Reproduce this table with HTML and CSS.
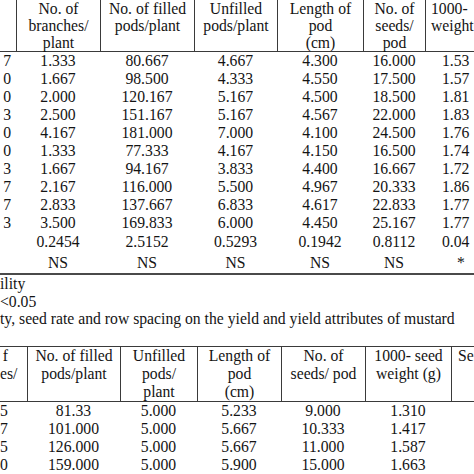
FILE: index.html
```html
<!DOCTYPE html>
<html>
<head>
<meta charset="utf-8">
<link rel="stylesheet" href="styles.css">
</head>
<body>
<div class="page">
  <table class="t1">
    <colgroup>
      <col class="a0"><col class="a1"><col class="a2"><col class="a3"><col class="a4"><col class="a5"><col class="a6">
    </colgroup>
    <thead>
      <tr>
        <th class="stub"></th>
        <th>No. of<br>branches/<br>plant</th>
        <th>No. of filled<br>pods/plant</th>
        <th>Unfilled<br>pods/plant</th>
        <th>Length of<br>pod<br>(cm)</th>
        <th>No. of<br>seeds/<br>pod</th>
        <th class="last">1000-<br>weight</th>
      </tr>
    </thead>
    <tbody>
      <tr><td class="stub">7</td><td>1.333</td><td>80.667</td><td>4.667</td><td>4.300</td><td>16.000</td><td class="last">1.53</td></tr>
      <tr><td class="stub">0</td><td>1.667</td><td>98.500</td><td>4.333</td><td>4.550</td><td>17.500</td><td class="last">1.57</td></tr>
      <tr><td class="stub">0</td><td>2.000</td><td>120.167</td><td>5.167</td><td>4.500</td><td>18.500</td><td class="last">1.81</td></tr>
      <tr><td class="stub">3</td><td>2.500</td><td>151.167</td><td>5.167</td><td>4.567</td><td>22.000</td><td class="last">1.83</td></tr>
      <tr><td class="stub">0</td><td>4.167</td><td>181.000</td><td>7.000</td><td>4.100</td><td>24.500</td><td class="last">1.76</td></tr>
      <tr><td class="stub">0</td><td>1.333</td><td>77.333</td><td>4.167</td><td>4.150</td><td>16.500</td><td class="last">1.74</td></tr>
      <tr><td class="stub">3</td><td>1.667</td><td>94.167</td><td>3.833</td><td>4.400</td><td>16.667</td><td class="last">1.72</td></tr>
      <tr><td class="stub">7</td><td>2.167</td><td>116.000</td><td>5.500</td><td>4.967</td><td>20.333</td><td class="last">1.86</td></tr>
      <tr><td class="stub">7</td><td>2.833</td><td>137.667</td><td>6.833</td><td>4.617</td><td>22.833</td><td class="last">1.77</td></tr>
      <tr><td class="stub">3</td><td>3.500</td><td>169.833</td><td>6.000</td><td>4.450</td><td>25.167</td><td class="last">1.77</td></tr>
      <tr class="cd"><td class="stub"></td><td>0.2454</td><td>2.5152</td><td>0.5293</td><td>0.1942</td><td>0.8112</td><td class="last">0.04</td></tr>
      <tr class="sig"><td class="stub"></td><td>NS</td><td>NS</td><td>NS</td><td>NS</td><td>NS</td><td class="last star">*</td></tr>
    </tbody>
  </table>

  <div class="notes">
    <p class="n1">ility</p>
    <p class="n2">&lt;0.05</p>
    <p class="n3">ty, seed rate and row spacing on the yield and yield attributes of mustard</p>
  </div>

  <table class="t2">
    <colgroup>
      <col class="b0"><col class="b1"><col class="b2"><col class="b3"><col class="b4"><col class="b5"><col class="b6">
    </colgroup>
    <thead>
      <tr>
        <th class="stub"><span class="s1">f</span><br><span class="s2">es/</span></th>
        <th>No. of filled<br>pods/plant</th>
        <th>Unfilled<br>pods/<br>plant</th>
        <th>Length of<br>pod<br>(cm)</th>
        <th>No. of<br>seeds/ pod</th>
        <th>1000- seed<br>weight (g)</th>
        <th class="last">Se</th>
      </tr>
    </thead>
    <tbody>
      <tr><td class="stub">5</td><td>81.33</td><td>5.000</td><td>5.233</td><td>9.000</td><td>1.310</td><td class="last"></td></tr>
      <tr><td class="stub">7</td><td>101.000</td><td>5.000</td><td>5.667</td><td>10.333</td><td>1.417</td><td class="last"></td></tr>
      <tr><td class="stub">5</td><td>126.000</td><td>5.000</td><td>5.667</td><td>11.000</td><td>1.587</td><td class="last"></td></tr>
      <tr><td class="stub">0</td><td>159.000</td><td>5.000</td><td>5.900</td><td>15.000</td><td>1.663</td><td class="last"></td></tr>
    </tbody>
  </table>
</div>
</body>
</html>
```

FILE: styles.css
```css
html, body {
  margin: 0;
  padding: 0;
  background: #ffffff;
  overflow: hidden;
}

body {
  width: 474px;
  height: 474px;
  font-family: "Liberation Serif", "Times New Roman", serif;
  font-size: 15.7px;
  color: #141414;
}

.page {
  width: 474px;
  overflow: hidden;
}

table {
  border-collapse: separate;
  border-spacing: 0;
  table-layout: fixed;
}

th, td {
  padding: 0;
  font-weight: normal;
  text-align: center;
  white-space: nowrap;
  overflow: visible;
}

/* ---------- first table ---------- */
.t1 {
  width: 474px;
  margin-top: 0;
}

.t1 .a0 { width: 16px; }
.t1 .a1 { width: 84px; }
.t1 .a2 { width: 94px; }
.t1 .a3 { width: 83px; }
.t1 .a4 { width: 86px; }
.t1 .a5 { width: 62px; }
.t1 .a6 { width: 49px; }

.t1 th {
  line-height: 17px;
  vertical-align: top;
  border-bottom: 1px solid #3a3a3a;
  border-left: 1px solid #3a3a3a;
}

.t1 th.stub {
  border-left: none;
}

.t1 th.last {
  text-align: left;
  padding-left: 5px;
}

.t1 td {
  line-height: 18px;
}

.t1 td.stub {
  text-align: right;
  padding-right: 5px;
}

.t1 td.last {
  text-align: left;
  padding-left: 17px;
}

.t1 td.star {
  padding-left: 32px;
}

.t1 tr.cd td {
  line-height: 20px;
}

.t1 tr.sig td {
  line-height: 21px;
  border-bottom: 2px solid #4a4a4a;
}

/* ---------- notes ---------- */
.notes p {
  margin: 0;
  line-height: 17.5px;
  white-space: nowrap;
}

.notes .n2 {
  text-indent: 0;
}

.notes .n3 {
  text-indent: 0;
}

/* ---------- second table ---------- */
.t2 {
  width: 474px;
  margin-top: 18.75px;
}

.t2 .b0 { width: 27px; }
.t2 .b1 { width: 93px; }
.t2 .b2 { width: 77px; }
.t2 .b3 { width: 84px; }
.t2 .b4 { width: 84px; }
.t2 .b5 { width: 86px; }
.t2 .b6 { width: 23px; }

.t2 th {
  line-height: 18px;
  vertical-align: top;
  border-top: 1.5px solid #3a3a3a;
  border-bottom: 1px solid #3a3a3a;
  border-left: 1px solid #3a3a3a;
}

.t2 th.stub {
  border-left: none;
  text-align: right;
}

.t2 th.stub .s1 {
  padding-right: 19px;
}

.t2 th.stub .s2 {
  padding-right: 14px;
}

.t2 th.last {
  text-align: left;
  padding-left: 6px;
}

.t2 td {
  line-height: 18px;
}

.t2 td.stub {
  text-align: right;
  padding-right: 21px;
}
```
